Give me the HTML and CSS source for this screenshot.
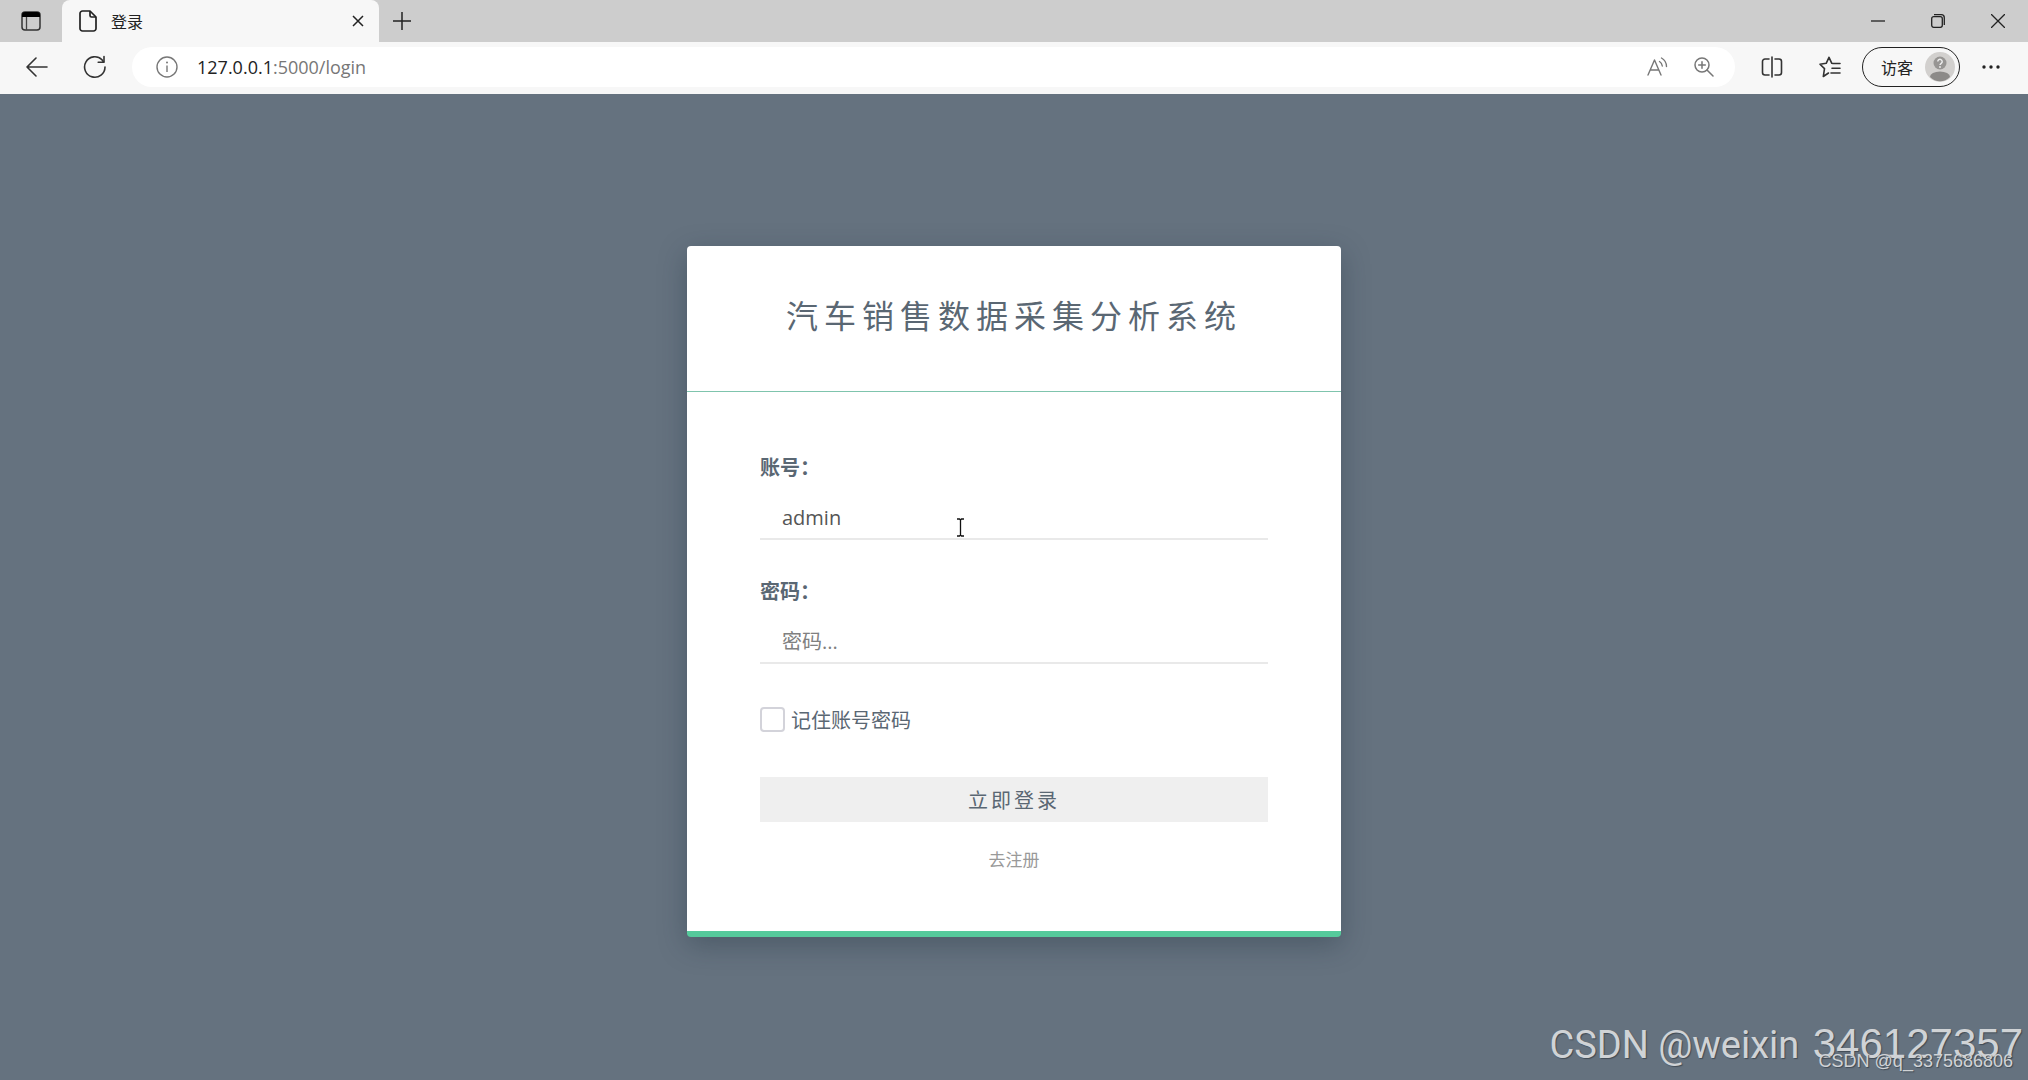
FILE: index.html
```html
<!DOCTYPE html>
<html lang="zh-CN">
<head>
<meta charset="utf-8">
<meta name="viewport" content="width=device-width, initial-scale=1">
<title>登录</title>
<link rel="stylesheet" href="styles.css">
</head>
<body>
<header class="browser">
  <div class="tab-strip">
    <button class="icon-btn tab-actions" aria-label="标签操作">
      <svg width="20" height="20" viewBox="0 0 20 20"><rect x="1" y="1" width="18" height="18" rx="3" fill="none" stroke="#333" stroke-width="1.5"/><path d="M1 6V4a3 3 0 0 1 3-3h12a3 3 0 0 1 3 3v2z" fill="#000"/><path d="M5.500 6v13" stroke="#444" stroke-width="1.300"/></svg>
    </button>
    <div class="tab">
      <svg width="18" height="22" viewBox="0 0 18 22" fill="none" stroke="#222" stroke-width="1.700" stroke-linejoin="round"><path d="M3.500 1H11l6 6v11.500a2.500 2.500 0 0 1-2.500 2.500h-11A2.500 2.500 0 0 1 1 18.500v-15A2.500 2.500 0 0 1 3.500 1z"/><path d="M11 1v4.500A1.500 1.500 0 0 0 12.500 7H17"/></svg>
      <span class="tab-title">登录</span>
      <button class="icon-btn tab-close" aria-label="关闭标签页">
        <svg width="12" height="12" viewBox="0 0 12 12" stroke="#222" stroke-width="1.500"><path d="M1 1l10 10M11 1L1 11"/></svg>
      </button>
    </div>
    <button class="icon-btn new-tab" aria-label="新建标签页">
      <svg width="20" height="20" viewBox="0 0 20 20" stroke="#222" stroke-width="1.500"><path d="M10 1v18M1 10h18"/></svg>
    </button>
    <div class="window-controls">
      <button class="icon-btn" aria-label="最小化"><svg width="14" height="14" viewBox="0 0 14 14" stroke="#222" stroke-width="1.300"><path d="M0 7h14"/></svg></button>
      <button class="icon-btn" aria-label="还原"><svg width="14" height="14" viewBox="0 0 14 14" fill="none" stroke="#222" stroke-width="1.300"><rect x=".7" y="2.700" width="10.600" height="10.600" rx="2"/><path d="M3 .7h7.300a3 3 0 0 1 3 3V11"/></svg></button>
      <button class="icon-btn" aria-label="关闭"><svg width="14" height="14" viewBox="0 0 14 14" stroke="#222" stroke-width="1.300"><path d="M0 0l14 14M14 0L0 14"/></svg></button>
    </div>
  </div>
  <div class="toolbar">
    <button class="icon-btn" aria-label="返回"><svg width="22" height="20" viewBox="0 0 22 20" fill="none" stroke="#333" stroke-width="1.600" stroke-linecap="round" stroke-linejoin="round"><path d="M10 1L1 10l9 9M1 10h20"/></svg></button>
    <button class="icon-btn" aria-label="刷新"><svg width="24" height="24" viewBox="0 0 24 24" fill="none" stroke="#333" stroke-width="1.600" stroke-linecap="round" stroke-linejoin="round"><path d="M22 12a10.200 10.200 0 1 1-3-7.200L20.500 7"/><path d="M21 1.500V7.300h-5.800"/></svg></button>
    <div class="address">
      <svg width="22" height="22" viewBox="0 0 22 22" fill="none" stroke="#777" stroke-width="1.400"><circle cx="11" cy="11" r="10"/><path d="M11 9.500v6.500"/><circle cx="11" cy="6.600" r="1" fill="#777" stroke="none"/></svg>
      <span class="url">127.0.0.1<span class="url-rest">:5000/login</span></span>
      <button class="icon-btn" aria-label="大声朗读"><svg width="22" height="20" viewBox="0 0 22 20" fill="none" stroke="#777" stroke-width="1.400" stroke-linecap="round" stroke-linejoin="round"><path d="M1 18L7.500 3 14 18M3.300 13h8.400M12.500 4.500a6 6 0 0 1 2.800 4.500M14.500 1a10 10 0 0 1 5 8.500"/></svg></button>
      <button class="icon-btn" aria-label="缩放"><svg width="20" height="20" viewBox="0 0 20 20" fill="none" stroke="#777" stroke-width="1.500" stroke-linecap="round"><circle cx="8" cy="8" r="7"/><path d="M13 13l6 6M8 4.700v6.600M4.700 8h6.600"/></svg></button>
    </div>
    <button class="icon-btn split" aria-label="分屏"><svg width="22" height="22" viewBox="0 0 22 22" fill="none" stroke="#333" stroke-width="1.600" stroke-linecap="round"><path d="M11 1v20M8 3H4a2.500 2.500 0 0 0-2.500 2.500v11A2.500 2.500 0 0 0 4 19h4M14 3h4a2.500 2.500 0 0 1 2.500 2.500v11A2.500 2.500 0 0 1 18 19h-4"/></svg></button>
    <button class="icon-btn favorites" aria-label="收藏夹"><svg width="22" height="22" viewBox="0 0 22 22" fill="none" stroke="#333" stroke-width="1.600" stroke-linecap="round" stroke-linejoin="round"><path d="M14 7.500l-1.200-.2L10 1.300 7.200 7.300 1 8.200l4.500 4.400L4.300 20.500 9.500 17M14 7.500h7M13 12.300h8M12 17h9"/></svg></button>
    <button class="profile">
      <span>访客</span>
      <svg width="30" height="30" viewBox="0 0 30 30"><circle cx="15" cy="15" r="15" fill="#d2d0ce"/><circle cx="15" cy="11" r="6.500" fill="#979593"/><path d="M5 25a10 5.500 0 0 1 20 0 14 14 0 0 1-20 0z" fill="#8c8a88"/><path d="M12.800 9.500a2.200 2.200 0 1 1 3.600 1.700c-.9.700-1.400 1-1.400 1.900" fill="none" stroke="#eee" stroke-width="1.400"/><circle cx="15" cy="15" r=".9" fill="#eee"/></svg>
    </button>
    <button class="icon-btn more" aria-label="设置及其他"><svg width="18" height="4" viewBox="0 0 18 4" fill="#222"><circle cx="2" cy="2" r="1.700"/><circle cx="9" cy="2" r="1.700"/><circle cx="16" cy="2" r="1.700"/></svg></button>
  </div>
</header>
<main class="page">
  <section class="card">
    <h1 class="card-title">汽车销售数据采集分析系统</h1>
    <form class="login-form">
      <div class="field">
        <label for="username">账号：</label>
        <input class="text-input" id="username" type="text" value="admin">
      </div>
      <div class="field">
        <label for="password">密码：</label>
        <input class="text-input" id="password" type="password" placeholder="密码...">
      </div>
      <div class="remember">
        <input class="check" id="remember" type="checkbox">
        <label for="remember">记住账号密码</label>
      </div>
      <button class="submit" type="button">立即登录</button>
      <a class="register" href="#register">去注册</a>
    </form>
    <svg class="pointer" width="9" height="19" viewBox="0 0 9 19" fill="none" stroke="#111" stroke-width="1.300"><path d="M1 1h2.500l1 1 1-1H8M4.500 2v15M1 18h2.500l1-1 1 1H8"/></svg>
  </section>
</main>
<div class="watermark watermark-large">CSDN @weixin <span class="watermark-id">346127357</span></div>
<div class="watermark watermark-small">CSDN @q_3375686806</div>
</body>
</html>
```

FILE: styles.css
```css
* {
  box-sizing: border-box;
}

body {
  margin: 0;
  min-height: 100vh;
  display: flex;
  flex-direction: column;
  background: #65727f;
  color: #5a6773;
  font-family: "Open Sans", "Noto Sans CJK SC", sans-serif;
  font-size: 20px;
}

button,
input {
  font: inherit;
  color: inherit;
}

svg {
  display: block;
  flex: none;
}

.icon-btn {
  display: flex;
  align-items: center;
  justify-content: center;
  flex: none;
  width: 58px;
  height: 40px;
  padding: 0;
  border: 0;
  background: none;
}

.browser {
  color: #222;
}

.tab-strip {
  display: flex;
  align-items: center;
  height: 42px;
  background: #cdcdcd;
}

.tab-strip .tab-actions {
  width: 62px;
}

.tab {
  display: flex;
  align-items: center;
  gap: 14px;
  width: 317px;
  height: 42px;
  padding: 0 6px 0 17px;
  border-radius: 8px 8px 0 0;
  background: #f7f7f7;
}

.tab-title {
  flex: 1;
  font-size: 16px;
}

.tab-strip .tab-close {
  width: 30px;
}

.tab-strip .new-tab {
  width: 46px;
}

.window-controls {
  display: flex;
  margin-left: auto;
}

.window-controls .icon-btn {
  width: 60px;
}

.toolbar {
  display: flex;
  align-items: center;
  height: 52px;
  padding: 0 6px 2px 8px;
  background: #f7f7f7;
}

.address {
  display: flex;
  align-items: center;
  flex: 1;
  height: 40px;
  margin-left: 8px;
  padding: 0 8px 0 24px;
  border-radius: 20px;
  background: #fff;
}

.url {
  flex: 1;
  padding-left: 19px;
  font-size: 18px;
}

.url-rest {
  color: #777;
}

.address .icon-btn {
  width: 46px;
}

.toolbar .split {
  width: 73px;
}

.toolbar .favorites {
  width: 44px;
}

.profile {
  display: flex;
  align-items: center;
  justify-content: space-between;
  width: 98px;
  height: 40px;
  margin-left: 10px;
  padding: 0 4px 0 18px;
  border: 1px solid #222;
  border-radius: 20px;
  background: none;
  font-size: 16px;
}

.toolbar .more {
  width: 62px;
}

.page {
  display: flex;
  flex: 1;
  align-items: center;
  justify-content: center;
  padding-top: 8px;
}

.card {
  position: relative;
  width: 100%;
  max-width: 654px;
  border-bottom: 6px solid #55c99b;
  border-radius: 4px;
  background: #fff;
  box-shadow: 0 8px 28px rgba(30, 45, 60, 0.35);
}

.card-title {
  margin: 0;
  padding: 46px 0 51px;
  border-bottom: 1px solid #7fc4ad;
  font-size: 32px;
  font-weight: 400;
  line-height: 48px;
  letter-spacing: 6px;
  text-align: center;
}

.login-form {
  display: flex;
  flex-direction: column;
  padding: 60px 73px 57px;
}

.field {
  display: flex;
  flex-direction: column;
  gap: 12px;
  margin-bottom: 36px;
}

.field label {
  font-weight: 700;
  line-height: 32px;
}

.text-input {
  height: 44px;
  padding: 2px 22px 0;
  border: 0;
  border-bottom: 2px solid #e9e9e9;
  outline: 0;
  background: none;
  color: #555;
}

.text-input::placeholder {
  color: #808080;
  opacity: 1;
}

.remember {
  display: flex;
  align-items: center;
  gap: 6px;
  height: 40px;
  margin-bottom: 37px;
}

.check {
  appearance: none;
  width: 25px;
  height: 25px;
  margin: 0;
  border: 2px solid #d3d3da;
  border-radius: 4px;
}

.submit {
  height: 45px;
  padding: 0;
  border: 0;
  background: #efefef;
  letter-spacing: 3px;
}

.register {
  align-self: center;
  margin-top: 24px;
  color: #999;
  font-size: 17px;
  line-height: 28px;
  text-decoration: none;
}

.pointer {
  position: absolute;
  top: 272px;
  left: 269px;
}

.watermark {
  position: absolute;
  color: #d0d3d6;
  white-space: nowrap;
  text-shadow: 1px 1px 1px #414b55;
}

.watermark-large {
  right: 5px;
  bottom: 7px;
  font-family: Roboto, sans-serif;
  font-size: 38px;
  line-height: 56px;
}

.watermark-id {
  margin-left: 4px;
  font-family: "Liberation Sans", sans-serif;
  font-size: 42px;
}

.watermark-small {
  right: 15px;
  bottom: 8px;
  font-family: "Liberation Sans", sans-serif;
  font-size: 18px;
  line-height: 22px;
}
```
